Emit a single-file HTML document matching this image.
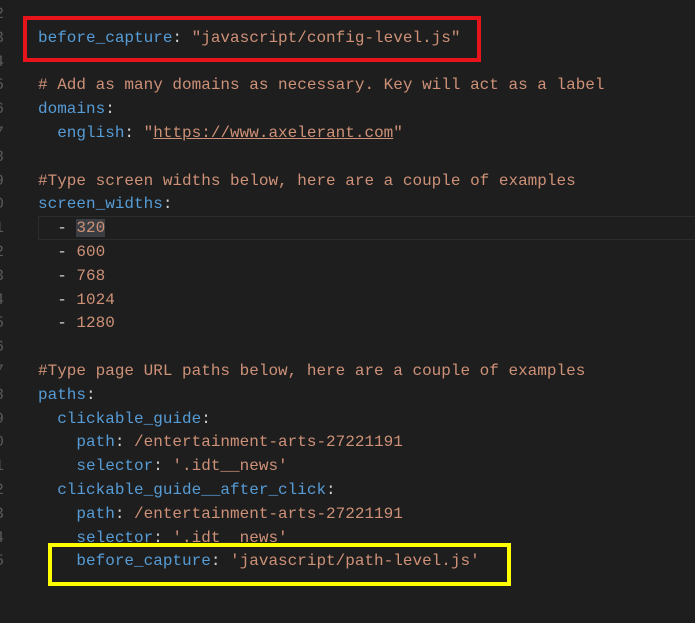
<!DOCTYPE html>
<html><head><style>
html,body{margin:0;padding:0;background:#1e1e1e;width:695px;height:623px;overflow:hidden;position:relative}
.c{position:absolute;left:38px;top:3px;font:16px/23.8px "Liberation Mono",monospace;color:#d4d4d4;white-space:pre}
.n{position:absolute;left:-6px;top:3px;font:16px/23.8px "Liberation Mono",monospace;color:#5a5a5a;white-space:pre;text-align:right;width:10px}
.k{color:#569cd6}.s{color:#ce9178}.u{text-decoration:underline}
.sel{background:#3a3d41}
.cur{position:absolute;left:38px;top:216px;width:670px;height:22px;border:1px solid #2c2c2c}
.box{position:absolute;border:4px solid}
</style></head><body>
<div class="cur"></div>
<div class="n">2
3
4
5
6
7
8
9
0
1
2
3
4
5
6
7
8
9
0
1
2
3
4
5</div>
<div class="c">
<span class="k">before_capture</span>: <span class="s">"javascript/config-level.js"</span>

<span class="s"># Add as many domains as necessary. Key will act as a label</span>
<span class="k">domains</span>:
  <span class="k">english</span>: <span class="s">"<span class="u">https://www.axelerant.com</span>"</span>

<span class="s">#Type screen widths below, here are a couple of examples</span>
<span class="k">screen_widths</span>:
  - <span class="s sel">320</span>
  - <span class="s">600</span>
  - <span class="s">768</span>
  - <span class="s">1024</span>
  - <span class="s">1280</span>

<span class="s">#Type page URL paths below, here are a couple of examples</span>
<span class="k">paths</span>:
  <span class="k">clickable_guide</span>:
    <span class="k">path</span>: <span class="s">/entertainment-arts-27221191</span>
    <span class="k">selector</span>: <span class="s">'.idt__news'</span>
  <span class="k">clickable_guide__after_click</span>:
    <span class="k">path</span>: <span class="s">/entertainment-arts-27221191</span>
    <span class="k">selector</span>: <span class="s">'.idt__news'</span>
    <span class="k">before_capture</span>: <span class="s">'javascript/path-level.js'</span></div>
<div class="box" style="left:23px;top:16px;width:450px;height:38px;border-color:#e8141c"></div>
<div class="box" style="left:48px;top:543px;width:455px;height:35px;border-color:#ffff00"></div>
</body></html>
